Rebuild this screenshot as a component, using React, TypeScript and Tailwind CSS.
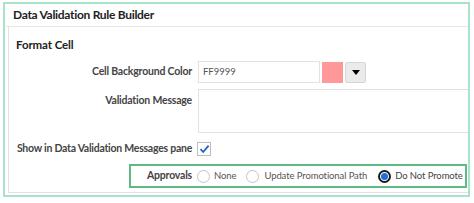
const font = { fontFamily: 'Lato, "Open Sans", sans-serif' };

const Radio = ({ checked }: { checked?: boolean }) =>
  checked ? (
    <span className="w-[13px] h-[13px] rounded-full border-2 border-[#1a1a1a] flex items-center justify-center shrink-0">
      <span className="w-[7px] h-[7px] rounded-full bg-[#1e6fd9]" />
    </span>
  ) : (
    <span className="w-[13px] h-[13px] rounded-full border border-[#c4c4c4] bg-white shrink-0" />
  );

export default function App() {
  return (
    <div className="w-[474px] h-[203px] bg-white pt-[2px] pl-[3px] text-[#333] whitespace-nowrap" style={font}>
      <div className="w-[467px] h-[195px] border-2 border-[#a9e4c8] flex flex-col overflow-hidden">
        {/* Header */}
        <div className="h-[23px] border-b border-[#e6e6e6] pl-[7px] flex items-center text-[12px] font-bold text-[#222] ml-[1px] tracking-[-0.3px]">
          Data Validation Rule Builder
        </div>

        {/* Format Cell section */}
        <div className="ml-[3px] flex-1 border-l border-b border-[#e2e2e2] mb-[2px]">
          <div className="pl-[7px] pt-[10px] text-[11.5px] font-bold text-[#222] leading-[16px] tracking-[-0.1px]">Format Cell</div>

          {/* Cell Background Color */}
          <div className="flex items-center mt-[8px] h-[22px]">
            <div className="w-[184px] shrink-0 text-right text-[10.5px] font-bold text-[#444] pr-[1px] tracking-[-0.2px]">Cell Background Color</div>
            <div className="ml-[5px] w-[122px] h-[22px] border border-[#e2e2e2] flex items-center pl-[4px] text-[9.5px] text-[#555]">
              FF9999
            </div>
            <div className="ml-[2px] w-[21px] h-[21px] bg-[#ff9999]" />
            <div className="ml-[2px] w-[21px] h-[21px] bg-[#ebebeb] border border-[#d6d6d6] rounded-[2px] flex items-center justify-center">
              <span className="w-0 h-0 border-l-[4px] border-r-[4px] border-t-[5px] border-l-transparent border-r-transparent border-t-black" />
            </div>
          </div>

          {/* Validation Message */}
          <div className="flex items-start mt-[6px]">
            <div className="w-[184px] shrink-0 text-right text-[10.5px] font-bold text-[#444] pr-[1px] pt-[4px] tracking-[-0.2px]">Validation Message</div>
            <div className="ml-[5px] flex-1 h-[44px] border border-[#e2e2e2] border-r-0" />
          </div>

          {/* Show in pane */}
          <div className="flex items-center mt-[9px] h-[14px]">
            <div className="w-[184px] shrink-0 text-right text-[10.5px] font-bold text-[#444] pr-[1px] tracking-[-0.25px]">Show in Data Validation Messages pane</div>
            <span className="ml-[4px] w-[14px] h-[14px] border border-[#bdbdbd] bg-white flex items-center justify-center">
              <svg width="11" height="10" viewBox="0 0 11 10">
                <path d="M1.5 5.2 L4.2 8 L9.6 1.6" fill="none" stroke="#1f63c4" strokeWidth="1.8" />
              </svg>
            </span>
          </div>

          {/* Approvals */}
          <div className="ml-[120px] mt-[8px] mr-[1px] h-[24px] border-2 border-[#5fb886] flex items-center text-[9.5px] tracking-[-0.1px] overflow-hidden">
            <div className="w-[61px] shrink-0 text-right text-[10.5px] font-bold text-[#444] tracking-[-0.2px]">Approvals</div>
            <div className="ml-[5px] shrink-0 flex items-center gap-[4px] text-[#555]">
              <Radio />
              <span>None</span>
            </div>
            <div className="ml-[10px] shrink-0 flex items-center gap-[5px] text-[#555]">
              <Radio />
              <span>Update Promotional Path</span>
            </div>
            <div className="ml-[11px] shrink-0 flex items-center gap-[4px] text-[#444]">
              <Radio checked />
              <span>Do Not Promote</span>
            </div>
          </div>
        </div>
      </div>
    </div>
  );
}
